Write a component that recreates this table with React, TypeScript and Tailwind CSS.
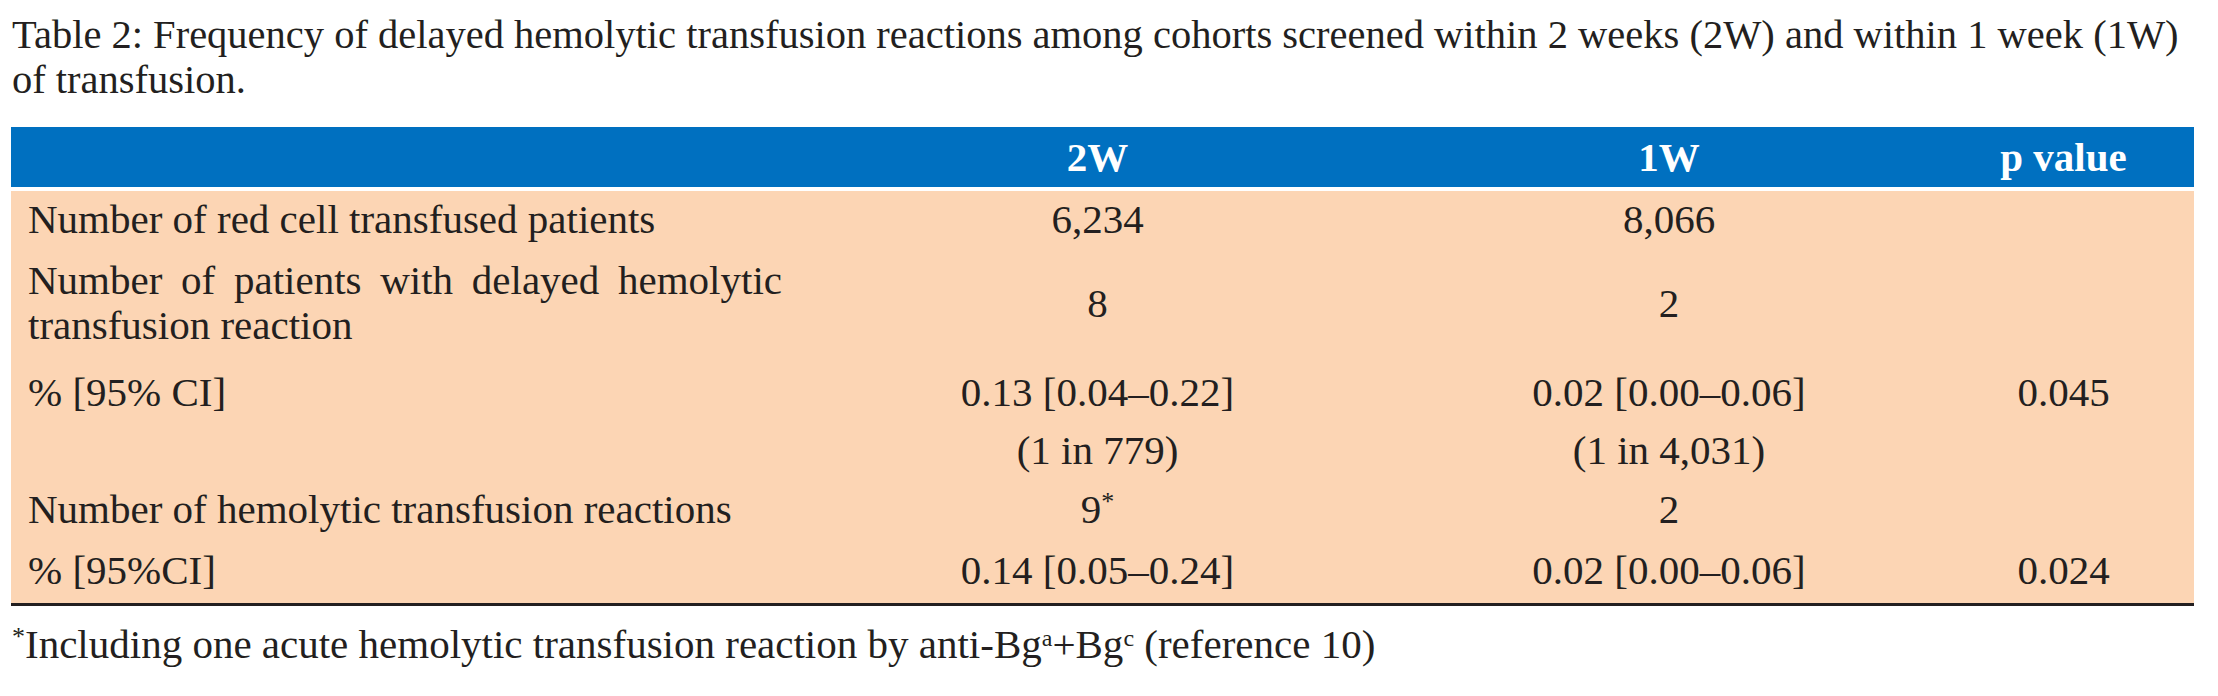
import React from 'react'

type Row = {
  label: string
  w2: React.ReactNode
  w1: React.ReactNode
  p: string
  className: string
}

const rows: Row[] = [
  { label: 'Number of red cell transfused patients', w2: '6,234', w1: '8,066', p: '', className: 'pt-[6px] pb-[10px]' },
  { label: 'Number of patients with delayed hemolytic transfusion reaction', w2: '8', w1: '2', p: '', className: 'pt-[6px] pb-[10px]' },
  { label: '% [95% CI]', w2: '0.13 [0.04–0.22]', w1: '0.02 [0.00–0.06]', p: '0.045', className: 'pt-[12px] pb-[6px]' },
  { label: '', w2: '(1 in 779)', w1: '(1 in 4,031)', p: '', className: 'pt-[7px] pb-[8px]' },
  {
    label: 'Number of hemolytic transfusion reactions',
    w2: (
      <>
        9<sup className="text-[26px] leading-none">*</sup>
      </>
    ),
    w1: '2',
    p: '',
    className: 'pt-[6px] pb-[10px]',
  },
  { label: '% [95%CI]', w2: '0.14 [0.05–0.24]', w1: '0.02 [0.00–0.06]', p: '0.024', className: 'pt-[6px] pb-[10px]' },
]

const cols = 'grid grid-cols-[779px_615px_528px_261px]'

export default function App() {
  return (
    <div className="w-[2218px] h-[696px] bg-white text-[#231f20] font-['Liberation_Serif',serif] text-[41px] leading-[45px] pt-[12px]">
      <p className="pl-[12px] text-[40.5px] whitespace-nowrap">
        Table 2: Frequency of delayed hemolytic transfusion reactions among cohorts screened within 2 weeks (2W) and within 1 week (1W)
        <br />
        of transfusion.
      </p>

      <div className="w-[2183px] ml-[11px] mt-[25px]">
        <div className={`${cols} h-[60px] items-center bg-[#0070c0] text-white font-bold`}>
          <div />
          <div className="text-center">2W</div>
          <div className="text-center">1W</div>
          <div className="text-center">p value</div>
        </div>

        <div className="mt-[4px] bg-[#fcd5b4] border-b-[3px] border-[#231f20]">
          {rows.map((r, i) => (
            <div key={i} className={`${cols} items-center ${r.className}`}>
              <div className="pl-[17px] pr-[8px] text-justify">{r.label}</div>
              <div className="text-center">{r.w2}</div>
              <div className="text-center">{r.w1}</div>
              <div className="text-center">{r.p}</div>
            </div>
          ))}
        </div>
      </div>

      <p className="pl-[12px] mt-[16px]">
        <sup className="text-[26px] leading-none">*</sup>Including one acute hemolytic transfusion reaction by anti-Bg
        <sup className="text-[24px] leading-none">a</sup>+Bg<sup className="text-[24px] leading-none">c</sup> (reference 10)
      </p>
    </div>
  )
}
